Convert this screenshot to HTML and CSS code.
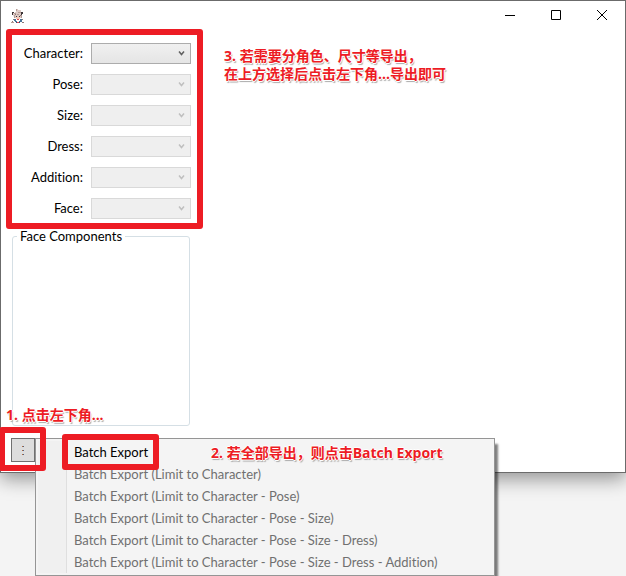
FILE: index.html
```
<!DOCTYPE html>
<html lang="zh-CN">
<head>
<meta charset="utf-8">
<title>Batch Export</title>
<link rel="stylesheet" href="styles.css">
</head>
<body>
<main class="window">
  <header class="titlebar">
    <svg class="app-icon" width="16" height="16" viewBox="0 0 16 16" aria-hidden="true">
      <path fill="#dccac5" d="M5 3h1V0h2v1h3v2h1v3l-1 2v1H4V8L3 6V4h2z"/>
      <path fill="#b59c96" d="M6 0h1v2H6zM4 4h2v1H4zM8 3h3v1H8zM4 6h1v3H4zM11 5h1v4h-1zM7 5h2v1H7zM1 13h3v1H1z"/>
      <path fill="#3c3436" d="M2 3h2v1H3v2H2zM11 3h2v2h-1v1h-1zM6 7h1v1H6zM9 7h1v1H9zM5 10h1v1H5z"/>
      <path fill="#f4c9b8" d="M6 8h4v2H6z"/>
      <path fill="#8e7775" d="M5 5h1v1H5zM10 6h1v1h-1zM3 10h1v1H3zM12 10h1v1h-1zM12 13h2v1h-2zM2 12h1v1H2z"/>
      <path fill="#477498" d="M4 10h2v2H4zM10 10h2v2h-2zM5 12h2v1H5zM9 12h3v1H9z"/>
      <path fill="#d94b55" d="M7 10h2v1H7zM7 13h2v1H7z"/>
      <path fill="#374c75" d="M6 13h1v1H6zM9 13h1v1H9z"/>
    </svg>
    <div class="caption-buttons">
      <button type="button" aria-label="Minimize"><svg width="10" height="10" viewBox="0 0 10 10"><path d="M0 5.5h10"/></svg></button>
      <button type="button" aria-label="Maximize"><svg width="10" height="10" viewBox="0 0 10 10"><path d="M.5.5h9v9h-9z"/></svg></button>
      <button type="button" aria-label="Close"><svg width="10" height="10" viewBox="0 0 10 10"><path d="M0 0l10 10M10 0L0 10"/></svg></button>
    </div>
  </header>

  <div class="side">
    <form class="filters">
      <label for="character">Character:</label>
      <span class="combo"><select id="character"></select><svg width="7" height="5" viewBox="0 0 7 5"><path d="M1 .5l2.5 3L6 .5"/></svg></span>
      <label for="pose">Pose:</label>
      <span class="combo"><select id="pose" disabled></select><svg width="7" height="5" viewBox="0 0 7 5"><path d="M1 .5l2.5 3L6 .5"/></svg></span>
      <label for="size">Size:</label>
      <span class="combo"><select id="size" disabled></select><svg width="7" height="5" viewBox="0 0 7 5"><path d="M1 .5l2.5 3L6 .5"/></svg></span>
      <label for="dress">Dress:</label>
      <span class="combo"><select id="dress" disabled></select><svg width="7" height="5" viewBox="0 0 7 5"><path d="M1 .5l2.5 3L6 .5"/></svg></span>
      <label for="addition">Addition:</label>
      <span class="combo"><select id="addition" disabled></select><svg width="7" height="5" viewBox="0 0 7 5"><path d="M1 .5l2.5 3L6 .5"/></svg></span>
      <label for="face">Face:</label>
      <span class="combo"><select id="face" disabled></select><svg width="7" height="5" viewBox="0 0 7 5"><path d="M1 .5l2.5 3L6 .5"/></svg></span>
    </form>
    <fieldset class="components">
      <legend>Face Components</legend>
    </fieldset>
  </div>

  <footer class="actions">
    <div class="menu-anchor">
      <button class="more" type="button" aria-label="More"><svg width="2" height="9" viewBox="0 0 2 9"><path fill="#b56a3c" d="M0 0h1v1H0zM0 4h1v1H0zM0 8h1v1H0z"/><path fill="#4d6385" d="M1 0h1v1H1zM1 4h1v1H1zM1 8h1v1H1z"/></svg></button>
      <div class="menu" role="menu">
        <button type="button" role="menuitem">Batch Export</button>
        <button type="button" role="menuitem" disabled>Batch Export (Limit to Character)</button>
        <button type="button" role="menuitem" disabled>Batch Export (Limit to Character - Pose)</button>
        <button type="button" role="menuitem" disabled>Batch Export (Limit to Character - Pose - Size)</button>
        <button type="button" role="menuitem" disabled>Batch Export (Limit to Character - Pose - Size - Dress)</button>
        <button type="button" role="menuitem" disabled>Batch Export (Limit to Character - Pose - Size - Dress - Addition)</button>
      </div>
      <span class="frame frame-more"></span>
      <span class="frame frame-item"></span>
      <p class="note note-1">1. 点击左下角...</p>
      <p class="note note-2">2. 若全部导出，则点击Batch Export</p>
    </div>
  </footer>

  <p class="note note-3">3. 若需要分角色、尺寸等导出，<br>在上方选择后点击左下角...导出即可</p>
</main>
</body>
</html>
```

FILE: styles.css
```
* {
  box-sizing: border-box;
}

body {
  margin: 0;
  min-height: 100vh;
  overflow: hidden;
  background: #f4f4f4;
  color: #000;
  font: 13px/21px Lato, "Noto Sans CJK SC", sans-serif;
  font-variant-ligatures: none;
}

button,
select {
  margin: 0;
  border: 0;
  padding: 0;
  background: none;
  color: inherit;
  font: inherit;
}

.window {
  position: relative;
  border: 1px solid #6b6b6b;
  background: #fff;
  box-shadow: 0 6px 18px rgba(0, 0, 0, 0.4);
}

.titlebar {
  display: flex;
  justify-content: space-between;
  height: 28px;
  padding-left: 9px;
}

.app-icon {
  margin-top: 8px;
}

.caption-buttons {
  display: flex;
}

.caption-buttons button {
  display: grid;
  place-items: center;
  width: 46px;
  height: 28px;
}

.caption-buttons path {
  fill: none;
  stroke: #000;
}

.side {
  width: max-content;
  padding-left: 5px;
}

.filters {
  display: grid;
  grid-template-columns: 71px 100px;
  grid-auto-rows: 21px;
  gap: 10px 8px;
  border: 6px solid #ed1c24;
  border-radius: 3px;
  padding: 8px 6px 4px 0;
}

.filters label {
  text-align: right;
}

.combo {
  display: grid;
  grid-template-rows: 21px;
}

.combo select,
.combo svg {
  grid-area: 1 / 1;
}

.combo select {
  appearance: none;
  height: 21px;
  border: 1px solid #acacac;
  border-radius: 0;
  background: linear-gradient(#f0f0f0, #e5e5e5);
}

.combo select:disabled {
  border-color: #d9d9d9;
  background: #efefef;
  opacity: 1;
}

.combo svg {
  place-self: start end;
  margin: 8px 6px 0 0;
  pointer-events: none;
}

.combo path {
  fill: none;
  stroke: #606060;
  stroke-width: 1.5;
}

.combo select:disabled + svg path {
  stroke: #bfbfbf;
}

.components {
  height: 197px;
  margin: 0 13px 0 6px;
  border: 1px solid #d5dfe5;
  border-radius: 3px;
  padding: 0;
}

.components legend {
  margin-left: 4px;
  padding: 0 3px;
  line-height: 14px;
}

.actions {
  padding: 12px 10px 10px;
}

.menu-anchor {
  position: relative;
  width: 24px;
}

.more {
  display: grid;
  place-items: center;
  width: 24px;
  height: 24px;
  border: 1px solid #707070;
  background: #ddd;
}

.menu {
  position: absolute;
  top: 0;
  left: 24px;
  display: grid;
  width: max-content;
  border: 1px solid #959595;
  padding: 2px;
  background: linear-gradient(#dfdfdf, #dfdfdf) 30px 2px / 1px calc(100% - 4px) no-repeat,
    linear-gradient(#f0f0f0, #f0f0f0) 2px 2px / 28px calc(100% - 4px) no-repeat, #f4f4f4;
  box-shadow: 4px 5px 2px -1px rgba(0, 0, 0, 0.5);
}

.menu button {
  padding: 0 55px 0 36px;
  line-height: 22px;
  text-align: left;
}

.menu button:disabled {
  color: #707070;
}

.frame {
  position: absolute;
  border: 6px solid #ed1c24;
  border-radius: 3px;
  pointer-events: none;
}

.frame-more {
  top: -11px;
  left: -12px;
  width: 47px;
  height: 44px;
}

.frame-item {
  top: -4px;
  left: 51px;
  width: 97px;
  height: 36px;
}

.note {
  position: absolute;
  margin: 0;
  color: #ed1c24;
  font: bold 14px/18px "Open Sans", "Noto Sans CJK SC", sans-serif;
  text-shadow: 1px 0 #fff, -1px 0 #fff, 0 1px #fff, 0 -1px #fff, 1px 2px 1px #aaa;
  white-space: nowrap;
}

.note-1 {
  top: -32px;
  left: -5px;
}

.note-2 {
  top: 6px;
  left: 200px;
}

.note-3 {
  top: 46px;
  left: 223px;
}
```
